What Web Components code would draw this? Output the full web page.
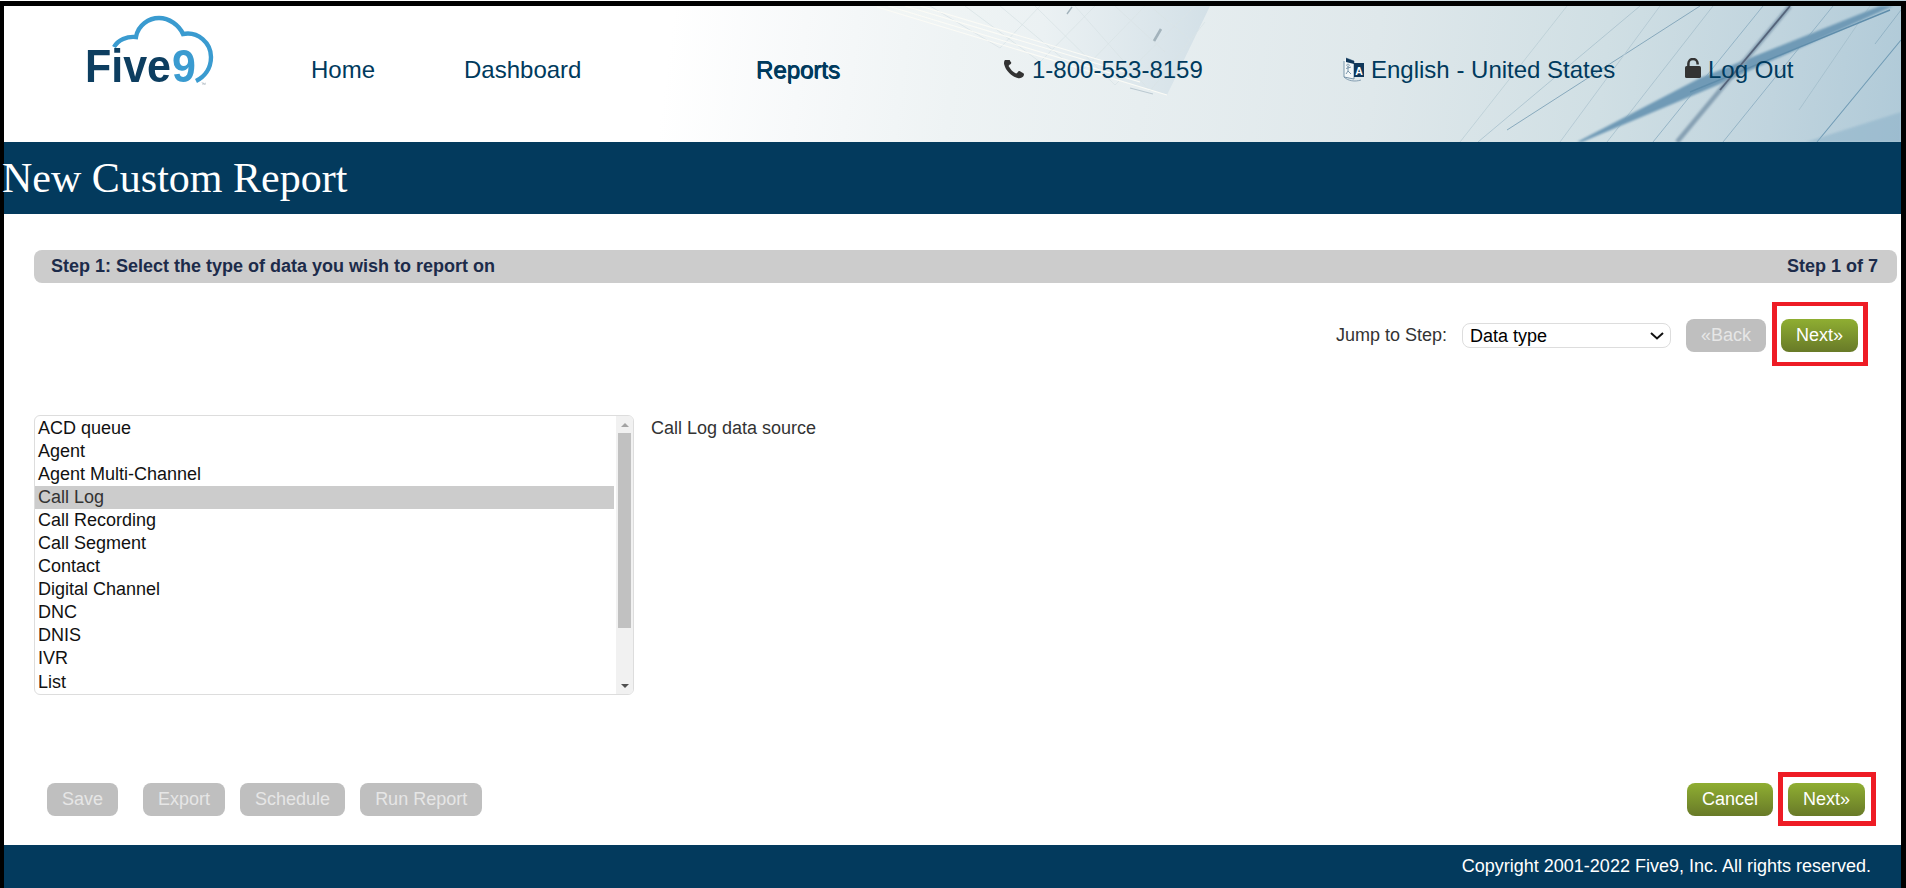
<!DOCTYPE html>
<html lang="en"><head><meta charset="utf-8"><title>New Custom Report</title>
<style>html,body{margin:0;padding:0;background:#fff;font-family:"Liberation Sans",Arial,sans-serif}</style></head>
<body>
<five9-app>
  <site-header>
    <five9-logo></five9-logo>
    <nav-link>Home</nav-link>
    <nav-link>Dashboard</nav-link>
    <nav-link active>Reports</nav-link>
    <nav-link><f9-icon name="phone" slot="icon"></f9-icon>1-800-553-8159</nav-link>
    <nav-link><f9-icon name="lang" slot="icon"></f9-icon>English - United States</nav-link>
    <nav-link><f9-icon name="lock" slot="icon"></f9-icon>Log Out</nav-link>
  </site-header>
  <page-title>New Custom Report</page-title>
  <report-body>
    <step-bar><span>Step 1: Select the type of data you wish to report on</span><span slot="end">Step 1 of 7</span></step-bar>
    <jump-row>
      <f9-button disabled>«Back</f9-button>
      <red-mark style="--t:-17px;--r:-10px;--b:-14px;--l:-9px;--bw:4px 5px"><f9-button>Next»</f9-button></red-mark>
    </jump-row>
    <data-picker>
      <span>Call Log data source</span>
    </data-picker>
    <action-bar>
      <f9-button disabled style="margin-right:10px">Save</f9-button>
      <f9-button disabled>Export</f9-button>
      <f9-button disabled>Schedule</f9-button>
      <f9-button disabled>Run Report</f9-button>
      <f9-button slot="end">Cancel</f9-button>
      <red-mark slot="end" style="--t:-11px;--r:-11px;--b:-10px;--l:-10px;--bw:5px"><f9-button>Next»</f9-button></red-mark>
    </action-bar>
  </report-body>
  <site-footer>Copyright 2001-2022 Five9, Inc. All rights reserved.</site-footer>
</five9-app>
<script>
function comp(name, html){
  customElements.define(name, class extends HTMLElement{
    constructor(){super();this.attachShadow({mode:'open'}).innerHTML=typeof html==='function'?html(this):html;}
  });
}
comp('five9-app',`<style>
:host{display:flex;flex-direction:column;height:888px;width:1906px;box-sizing:border-box;overflow:hidden;background:#fff;color:#333}
.strip{height:1px;flex:none;background:linear-gradient(90deg,#fff 35%,#e6edef 60%,#b9cfd9 100%)}
.frame{flex:1;display:flex;flex-direction:column;min-height:0;border-top:5px solid #000;border-left:4px solid #000;border-right:5px solid #000}
</style><div class="strip"></div><div class="frame"><slot></slot></div>`);

comp('site-header',`<style>
:host{display:grid;flex:none;position:relative;height:136px;overflow:hidden;
grid-template-columns:307px 153px 292px 248px 339px 342px 1fr;
background:linear-gradient(97deg,#fff 35%,#f7f9fa 42%,#eef3f4 50%,#e7eef0 60%,#dfe8eb 72%,#d0dfe4 84%,#c0d4de 93%,#b0cad8 100%)}
svg{position:absolute;inset:0;width:100%;height:100%}
::slotted(*){position:relative}
</style>
<svg viewBox="0 0 1897 136" aria-hidden="true">
<defs>
<linearGradient id="p" x1="0" x2="1" y1="0" y2="0"><stop offset="0" stop-color="#f2f6f5"/><stop offset=".5" stop-color="#ebf1f3"/><stop offset="1" stop-color="#d3e0e7"/></linearGradient>
<filter id="b1" x="-10%" y="-10%" width="120%" height="120%"><feGaussianBlur stdDeviation=".8"/></filter>
<filter id="b2" x="-10%" y="-10%" width="120%" height="120%"><feGaussianBlur stdDeviation=".35"/></filter>
<filter id="b3" x="-10%" y="-10%" width="120%" height="120%"><feGaussianBlur stdDeviation=".7"/></filter>
</defs>
<g transform="translate(-4 -6)">
<polygon points="877,6 1210,6 1167,95" fill="url(#p)" filter="url(#b3)"/>
<g stroke="#d9e3e6" stroke-width=".8" fill="none" filter="url(#b2)">
<path d="M930 6 L1000 48M965 6 L1040 62M1000 6 L1080 73M1035 6L1115 85M1075 6L1150 91M1115 6L1165 52M1150 6L1190 40"/>
<path d="M1000 48L1040 6M1040 62L1095 6M1080 73L1145 6M1115 85L1195 6M1150 91L1205 22"/>
</g>
<g stroke="#fbfbf6" stroke-width="1.1" fill="none">
<path d="M877 7L1167 95M888 6L1140 82M905 6L1125 72M920 6L1110 63"/>
</g>
<path d="M1154 41L1161 29" stroke="#a3b3bc" stroke-width="2.6" filter="url(#b2)"/>
<path d="M1067 14L1072 7" stroke="#a3b3bc" stroke-width="1.4" filter="url(#b2)"/>
<path d="M1130 88L1153 94" stroke="#bccad2" stroke-width="1.2" filter="url(#b2)"/>
<g fill="none" filter="url(#b2)" stroke-width=".9">
<path d="M1567 6L1460 142" stroke="#bdd0d7"/>
<path d="M1640 6L1478 142" stroke="#adc4cf"/>
<path d="M1700 6L1507 130" stroke="#7fa3b8"/>
<path d="M1660 6L1560 142" stroke="#b3c8d2"/>
<path d="M1713 6L1607 142" stroke="#a9c2ce"/>
<path d="M1763 6L1653 142" stroke="#8fb0c3"/>
<path d="M1833 6L1723 142" stroke="#8fb0c3"/>
<path d="M1870 6L1799 110" stroke="#a5bfcd"/>
<path d="M1901 40L1817 142" stroke="#6f9ab4" stroke-width="1.1"/>
<path d="M1901 10L1875 44" stroke="#8fb0c3"/>
</g>
<polygon points="1893,6 1880,6 1700,78 1577,142 1582,142 1720,84" fill="#6f9ab6" filter="url(#b1)"/>
<path d="M1890 10L1690 92" stroke="#5f8dab" stroke-width="1.4" fill="none" filter="url(#b2)"/>
<path d="M1790 6L1677 142" stroke="#86a0b3" stroke-width="4.5" fill="none" filter="url(#b1)"/>
<path d="M1790 6L1720 90" stroke="#55647a" stroke-width="1.8" fill="none" filter="url(#b2)"/>
<path d="M1901 112L1806 142L1901 142Z" fill="#8db2c9" opacity=".55" filter="url(#b1)"/>
</g>
</svg><slot></slot>`);

comp('five9-logo',`<style>:host{display:block;padding:6px 0 0 81px}svg{display:block;filter:blur(.3px)}</style>
<svg width="142" height="80" viewBox="0 0 142 80">
<path d="M29 35C33 28 42 24 51 25C53 13 64 6 74 6C84 6 94 13 98 22C113 19 126 31 126 45C126 57 119 65 111 69" fill="none" stroke="#3a9bd0" stroke-width="4.4"/>
<g transform="translate(0 70) scale(1 1.09)" font-family="'Liberation Sans',Arial,sans-serif" font-weight="700" font-size="43">
<text x="0" y="0" fill="#0d3e60">Five</text>
<text x="87" y="0" fill="#3a9bd0">9</text>
</g>
<text x="116" y="74" font-family="'Liberation Sans',sans-serif" font-size="5" fill="#8a9aa5">™</text>
</svg>`);

comp('nav-link',el=>`<style>:host{display:block;padding-top:49px;font:24px/30px "Liberation Sans",Arial,sans-serif;color:#003a5d;white-space:nowrap}
:host([active]){text-shadow:.6px .6px 0 #003a5d,-.3px 0 0 #1b5a80}
.r{display:flex;align-items:flex-start}</style><div class="r"><slot name="icon"></slot><span><slot></slot></span></div>`);

const ICONS={
phone:`<svg style="margin:5px 8px 0 0" width="20" height="20" viewBox="192 256 1408 1408"><path fill="#333" d="M1600 1240q0 27-10 70.5t-21 68.5q-21 50-122 106-94 51-186 51-27 0-53-3.5t-57.5-12.5-47-14.5-55.5-20.5-49-18q-98-35-175-83-127-79-264-216t-216-264q-48-77-83-175-3-9-18-49t-20.5-55.5-14.5-47-12.5-57.5-3.5-53q0-92 51-186 56-101 106-122 25-11 68.5-21t70.5-10q14 0 21 3 18 6 53 76 11 19 30 54t35 63.5 31 53.5q3 4 17.5 25t21.5 35.5 7 28.5q0 20-28.5 50t-62 55-62 53-28.5 46q0 9 5 22.5t8.5 20.5 14 24 11.5 19q76 137 174 235t235 174q2 1 19 11.5t24 14 20.5 8.5 22.5 5q18 0 46-28.5t53-62 55-62 50-28.5q14 0 28.5 7t35.5 21.5 25 17.5q25 15 53.5 31t63.5 35 54 30q70 35 76 53 3 7 3 21z"/></svg>`,
lang:`<svg style="margin:2px 6px 0 0" width="22" height="25" viewBox="0 0 22 25"><path d="M1 4V20L11 22V4L3 1" fill="#f3f7f8" stroke="#6e8ca3" stroke-width=".9"/><path d="M3 1L11 4V7L3 5Z" fill="#10375a"/><path d="M11 6H21V20H11Z" fill="#10375a"/><text x="16" y="18" text-anchor="middle" font-family="'Liberation Sans',sans-serif" font-weight="700" font-size="10.5" fill="#fff">A</text><path d="M5 9.5a1.2 1.2 0 1 1 .01 0M3 11.5L8 10M5 10V14L3 17M5 14L8 17" fill="none" stroke="#6e8ca3" stroke-width=".9"/><path d="M1 20C5 24 12 25 18 23" fill="none" stroke="#6e8ca3" stroke-width=".8"/></svg>`,
lock:`<svg style="margin:3px 7px 0 0" width="16" height="22" viewBox="0 0 16 22"><path d="M3.4 9V5.6a4.6 4.6 0 0 1 9.2 0V6.6" fill="none" stroke="#333" stroke-width="2.5"/><rect x="0" y="8" width="16" height="12" rx="1.6" fill="#333"/></svg>`};
comp('f9-icon',el=>`<style>:host{display:block;line-height:0}svg{display:block}</style>${ICONS[el.getAttribute('name')]||''}`);

comp('page-title',`<style>:host{display:flex;align-items:center;flex:none;height:72px;background:#033a5d;color:#fff;font:42px "Liberation Serif","Times New Roman",serif}
span{margin-left:-2px}</style><span><slot></slot></span>`);

comp('report-body',`<style>:host{display:flex;flex-direction:column;flex:1;min-height:0;padding:36px 4px 0 30px;background:#fff}</style><slot></slot>`);

comp('step-bar',`<style>:host{display:flex;justify-content:space-between;align-items:center;flex:none;height:33px;padding:0 19px 0 17px;border-radius:8px;background:#ccc;color:#1c2b4a;font:bold 18px "Liberation Sans",Arial,sans-serif}</style><span><slot></slot></span><span><slot name="end"></slot></span>`);

comp('jump-row',`<style>:host{display:flex;justify-content:flex-end;align-items:center;gap:15px;margin:36px 39px 0 0;height:33px;font:18px "Liberation Sans",Arial,sans-serif;color:#333}
.sel{display:block;position:relative;width:209px;height:25px}
select{appearance:none;-webkit-appearance:none;display:block;width:100%;height:100%;box-sizing:border-box;border:1px solid #ddd;border-radius:8px;background:#fff;color:#000;font:18px "Liberation Sans",Arial,sans-serif;padding:0 7px}
svg{position:absolute;right:7px;top:9px;pointer-events:none}</style>
<span>Jump to Step:</span><span class="sel"><select aria-label="Jump to Step"><option>Data type</option></select><svg width="14" height="8" viewBox="0 0 14 8"><path d="M1 1L7 6.5L13 1" fill="none" stroke="#111" stroke-width="2"/></svg></span><slot></slot>`);

comp('f9-button',`<style>:host{display:inline-flex;align-items:center;justify-content:center;height:33px;box-sizing:border-box;padding:0 15px;border-radius:8px;color:#fff;font:18px "Liberation Sans",Arial,sans-serif;white-space:nowrap;background:linear-gradient(#8fae32,#687a28)}
:host([disabled]){background:#bfbfbf;color:#e6e6e6}</style><slot></slot>`);

comp('red-mark',`<style>:host{display:inline-flex;position:relative}
.m{position:absolute;top:var(--t);right:var(--r);bottom:var(--b);left:var(--l);border:solid #ee1c25;border-width:var(--bw);pointer-events:none}</style><slot></slot><div class="m"></div>`);

const ROWS=['ACD queue','Agent','Agent Multi-Channel','Call Log','Call Recording','Call Segment','Contact','Digital Channel','DNC','DNIS','IVR','List'];
comp('data-picker',`<style>:host{display:flex;gap:17px;margin-top:63px;flex:none;font:18px "Liberation Sans",Arial,sans-serif;color:#333}
.desc{padding-top:2px;line-height:23px}</style>
<f9-listbox items='${JSON.stringify(ROWS)}' selected="3"></f9-listbox><div class="desc"><slot></slot></div>`);

comp('f9-listbox',el=>{
  const items=JSON.parse(el.getAttribute('items')),sel=+el.getAttribute('selected');
  return `<style>:host{display:flex;width:600px;height:280px;box-sizing:border-box;border:1px solid #ddd;border-radius:6px;overflow:hidden;background:#fff;color:#111;font:18px/23px "Liberation Sans",Arial,sans-serif}
.rows{flex:1;padding-top:1px;min-width:0}.row{height:23px;padding-left:3px;white-space:nowrap}.row.on{background:#ccc;color:#333}.row:last-child{margin-top:1px}
.bar{width:17px;margin-left:2px;background:#f1f1f1;display:flex;flex-direction:column;align-items:center;flex:none}
.up,.dn{height:17px;flex:none;display:flex;align-items:center;justify-content:center}
.thumb{width:13px;height:195px;background:#c1c1c1;flex:none}.sp{flex:1}
i{display:block;width:0;height:0;border-left:4px solid transparent;border-right:4px solid transparent}
.up i{border-bottom:4px solid #a3a3a3}.dn i{border-top:4px solid #505050}</style>
<div class="rows" role="listbox">${items.map((t,i)=>`<div class="row${i===sel?' on':''}">${t}</div>`).join('')}</div>
<div class="bar"><div class="up"><i></i></div><div class="thumb"></div><div class="sp"></div><div class="dn"><i></i></div></div>`;
});

comp('action-bar',`<style>:host{display:flex;justify-content:space-between;margin:88px 32px 0 13px;height:33px}
div{display:flex;gap:15px}</style><div><slot></slot></div><div><slot name="end"></slot></div>`);

comp('site-footer',`<style>:host{display:flex;justify-content:flex-end;align-items:center;flex:none;margin-top:auto;height:43px;box-sizing:border-box;padding-right:30px;background:#033a5d;color:#fff;font:18px "Liberation Sans",Arial,sans-serif}</style><slot></slot>`);
</script>
</body></html>
